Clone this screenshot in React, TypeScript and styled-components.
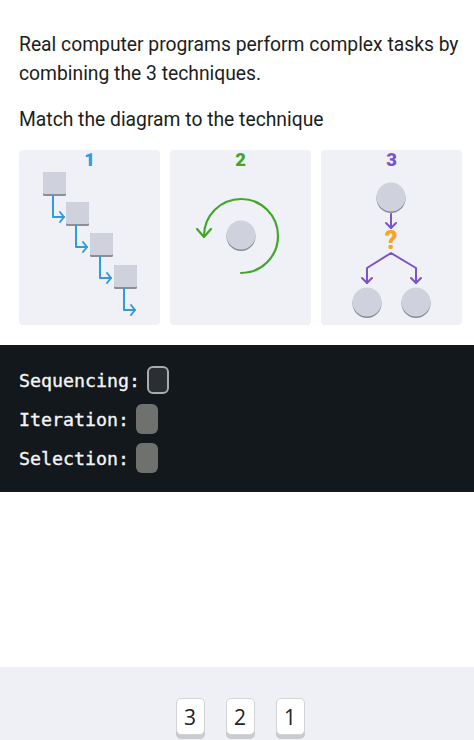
import React from 'react';
import styled, { createGlobalStyle } from 'styled-components';

const GlobalStyle = createGlobalStyle`
  html, body {
    margin: 0;
    padding: 0;
    background: #ffffff;
  }
  * {
    box-sizing: border-box;
  }
`;

const Page = styled.div`
  display: flex;
  flex-direction: column;
  min-height: 100vh;
  font-family: Roboto, "Liberation Sans", sans-serif;
  color: #1c1d20;
`;

const Intro = styled.section`
  padding: 30px 10px 0 19px;
`;

const Paragraph = styled.p<{ $gap?: number }>`
  margin: 0 0 ${({ $gap }) => $gap ?? 0}px;
  font-size: 19.3px;
  line-height: 29px;
`;

const CardGrid = styled.div`
  display: grid;
  grid-template-columns: repeat(3, 141px);
  gap: 10px;
  margin-top: 16px;
`;

const Card = styled.div`
  display: flex;
  flex-direction: column;
  align-items: center;
  height: 175px;
  background: #eff1f6;
  border-radius: 4px;
`;

const CardNumber = styled.div<{ $color: string }>`
  margin-top: 1px;
  height: 19px;
  line-height: 19px;
  font-size: 18.5px;
  font-weight: 900;
  color: ${({ $color }) => $color};
`;

const Diagram = styled.svg`
  display: block;
  width: 141px;
  height: 155px;
`;

const CodePanel = styled.section`
  display: flex;
  flex-direction: column;
  gap: 9px;
  margin-top: 20px;
  padding: 20px 19px 19px;
  background: #12181b;
`;

const CodeRow = styled.div`
  display: flex;
  align-items: center;
  gap: 7px;
  height: 30px;
`;

const Label = styled.span`
  font-family: "DejaVu Sans Mono", "Liberation Mono", monospace;
  font-size: 18.3px;
  color: #f4f4f4;
  -webkit-text-stroke: 0.35px #f4f4f4;
`;

const Slot = styled.span<{ $active?: boolean }>`
  display: block;
  width: 22px;
  height: ${({ $active }) => ($active ? 28 : 30)}px;
  border-radius: 6px;
  background: ${({ $active }) => ($active ? '#2b2e33' : '#6f716f')};
  border: ${({ $active }) => ($active ? '2px solid #a9acab' : 'none')};
`;

const Tray = styled.footer`
  display: flex;
  justify-content: center;
  gap: 21px;
  margin-top: auto;
  height: 73px;
  padding: 31px 0 0 6px;
  background: #eef0f5;
`;

const Tile = styled.button`
  width: 29px;
  height: 37px;
  padding: 0;
  border: 1px solid #d2d3d6;
  border-radius: 5px;
  background: #ffffff;
  box-shadow: 0 4px 0 #c9cacd;
  font-family: "Open Sans", Roboto, sans-serif;
  font-size: 21px;
  color: #222222;
`;

const BLUE = '#2f9be0';
const GREEN = '#43a628';
const PURPLE = '#7b53cd';
const ORANGE = '#f5a623';

const Block = ({ x, y }: { x: number; y: number }) => (
  <g>
    <rect x={x} y={y} width={23} height={24} rx={1.5} fill="#8a8e99" />
    <rect x={x} y={y} width={23} height={22} rx={1.5} fill="#cfd2dc" />
  </g>
);

const Ball = ({ cx, cy }: { cx: number; cy: number }) => (
  <g>
    <circle cx={cx} cy={cy + 1.5} r={14.5} fill="#878b96" />
    <circle cx={cx} cy={cy} r={14.5} fill="#cfd2dc" />
  </g>
);

// diagrams use card-relative coordinates; the header above takes 20px
const SequenceDiagram = () => {
  const blocks = [
    { x: 24, y: 22 },
    { x: 47, y: 52 },
    { x: 71, y: 83 },
    { x: 95, y: 115 },
  ];
  return (
    <Diagram viewBox="0 20 141 155">
      {blocks.map((b) => (
        <Block key={b.y} x={b.x} y={b.y} />
      ))}
      <g fill="none" stroke={BLUE} strokeWidth={2} strokeLinecap="round" strokeLinejoin="round">
        {blocks.map((b) => (
          <g key={b.y}>
            <path d={`M ${b.x + 10} ${b.y + 24} V ${b.y + 45} H ${b.x + 21}`} />
            <path d={`M ${b.x + 17} ${b.y + 40} L ${b.x + 21} ${b.y + 45} L ${b.x + 17} ${b.y + 50}`} />
          </g>
        ))}
      </g>
    </Diagram>
  );
};

const IterationDiagram = () => (
  <Diagram viewBox="0 20 141 155">
    <Ball cx={71} cy={85} />
    <g fill="none" stroke={GREEN} strokeWidth={2.2} strokeLinecap="round" strokeLinejoin="round">
      <path d="M 71 123 A 37 37 0 1 0 34 86" />
      <path d="M 27 79 L 34 87 L 41 79" />
    </g>
  </Diagram>
);

const SelectionDiagram = () => (
  <Diagram viewBox="0 20 141 155">
    <Ball cx={70} cy={47} />
    <g fill="none" stroke={PURPLE} strokeWidth={2} strokeLinecap="round" strokeLinejoin="round">
      <path d="M 70 64 V 78" />
      <path d="M 65 73 L 70 78 L 75 73" />
      <path d="M 46 133 V 118 L 70 103 L 95 118 V 133" />
      <path d="M 41 128 L 46 133 L 51 128" />
      <path d="M 90 128 L 95 133 L 100 128" />
    </g>
    <text
      x={70}
      y={99}
      textAnchor="middle"
      fontFamily="Roboto, sans-serif"
      fontWeight={900}
      fontSize={25}
      fill={ORANGE}
    >
      ?
    </text>
    <Ball cx={46} cy={152} />
    <Ball cx={95} cy={152} />
  </Diagram>
);

const App: React.FC = () => {
  return (
    <Page>
      <GlobalStyle />
      <Intro>
        <Paragraph $gap={17}>
          Real computer programs perform complex tasks by combining the 3 techniques.
        </Paragraph>
        <Paragraph>Match the diagram to the technique</Paragraph>
        <CardGrid>
          <Card>
            <CardNumber $color={BLUE}>1</CardNumber>
            <SequenceDiagram />
          </Card>
          <Card>
            <CardNumber $color={GREEN}>2</CardNumber>
            <IterationDiagram />
          </Card>
          <Card>
            <CardNumber $color={PURPLE}>3</CardNumber>
            <SelectionDiagram />
          </Card>
        </CardGrid>
      </Intro>

      <CodePanel>
        <CodeRow>
          <Label>Sequencing:</Label>
          <Slot $active />
        </CodeRow>
        <CodeRow>
          <Label>Iteration:</Label>
          <Slot />
        </CodeRow>
        <CodeRow>
          <Label>Selection:</Label>
          <Slot />
        </CodeRow>
      </CodePanel>

      <Tray>
        <Tile type="button">3</Tile>
        <Tile type="button">2</Tile>
        <Tile type="button">1</Tile>
      </Tray>
    </Page>
  );
};

export default App;
